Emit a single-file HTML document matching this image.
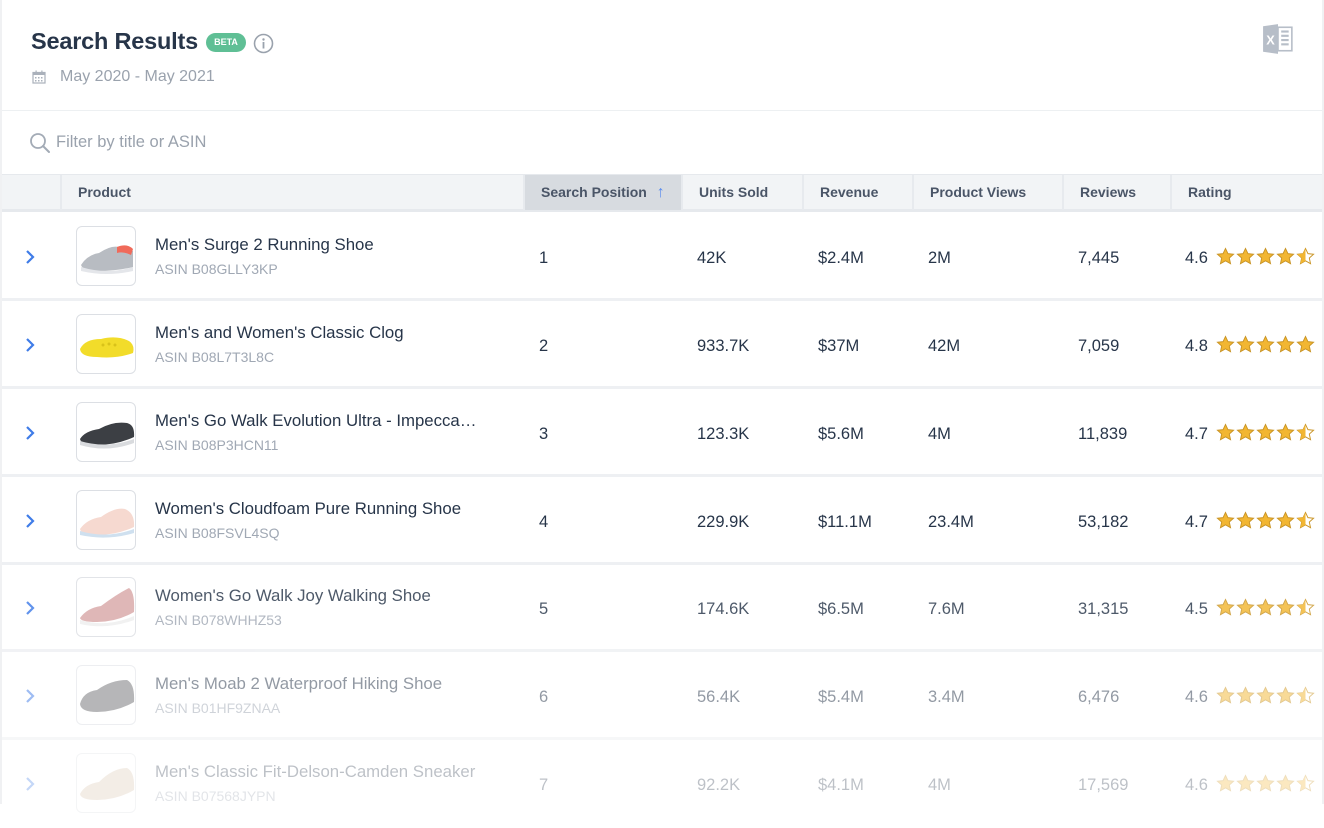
<!DOCTYPE html>
<html><head><meta charset="utf-8"><style>
*{margin:0;padding:0;box-sizing:border-box}
body{width:1324px;height:804px;overflow:hidden;background:#fff;font-family:"Liberation Sans",Arial,sans-serif;color:#273549;position:relative}
.abs{position:absolute}
.hdr{position:absolute;top:174px;left:2px;width:1320px;height:38px;background:#f2f4f6;border-top:1px solid #e6e9ed;border-bottom:3px solid #e6e9ed}
.hc{position:absolute;top:0;height:35px;line-height:35px;font-size:14px;font-weight:bold;color:#4a5567;padding-left:16px;border-left:2px solid #e7eaee}
.row{position:absolute;left:2px;width:1320px;height:88px;border-bottom:3px solid #eef0f3}
.c{position:absolute;top:2px;height:86px;line-height:86px;font-size:16.5px;color:#273549}
.nm{position:absolute;left:153px;top:22px;font-size:16.8px;color:#273549;white-space:nowrap}
.as{position:absolute;left:153px;top:48px;font-size:14px;color:#a0a8b4}
.th{position:absolute;left:74px;top:13px;width:60px;height:60px;border:1px solid #dcdfe4;border-radius:6px;background:#fff;overflow:hidden}
.chev{position:absolute;left:22px;top:36px}
.stars{position:absolute;left:1214px;top:34px}
</style></head><body>
<div class="abs" style="left:0;top:0;width:2px;height:804px;background:#f0f1f3"></div>
<div class="abs" style="right:0;top:0;width:2px;height:804px;background:#f0f1f3"></div>
<div class="abs" style="left:31px;top:28px;font-size:23.5px;font-weight:bold;color:#273549;letter-spacing:-0.2px">Search Results</div>
<div class="abs" style="left:206px;top:33px;width:40px;height:19px;border-radius:10px;background:#5fbf95;color:#fff;font-size:9px;font-weight:bold;text-align:center;line-height:19px">BETA</div>
<svg class="abs" style="left:253px;top:33px" width="21" height="21" viewBox="0 0 21 21"><circle cx="10.5" cy="10.5" r="9" fill="none" stroke="#9aa2ad" stroke-width="1.6"/><circle cx="10.5" cy="6.5" r="1.2" fill="#9aa2ad"/><rect x="9.6" y="9" width="1.8" height="6.5" fill="#9aa2ad"/></svg>
<svg class="abs" style="left:32px;top:70px" width="14" height="14" viewBox="0 0 14 14"><rect x="1" y="2.5" width="12" height="10.5" fill="none" stroke="#aab1bb" stroke-width="1.2"/><rect x="1" y="2.5" width="12" height="2.5" fill="#aab1bb"/><rect x="3.5" y="0.5" width="1.2" height="3" fill="#aab1bb"/><rect x="9.3" y="0.5" width="1.2" height="3" fill="#aab1bb"/><g fill="#aab1bb"><rect x="3" y="7" width="1.5" height="1.5"/><rect x="6" y="7" width="1.5" height="1.5"/><rect x="9" y="7" width="1.5" height="1.5"/><rect x="3" y="10" width="1.5" height="1.5"/><rect x="6" y="10" width="1.5" height="1.5"/><rect x="9" y="10" width="1.5" height="1.5"/></g></svg>
<div class="abs" style="left:60px;top:68px;font-size:16px;color:#9aa2ad">May 2020 - May 2021</div>
<svg class="abs" style="left:1262px;top:23px" width="32" height="32" viewBox="0 0 30 30"><path d="M1 3 L15 1 L15 29 L1 27 Z" fill="#b7bec8"/><text x="4" y="20" font-family="Liberation Sans" font-weight="bold" font-size="12" fill="#fff">X</text><rect x="15" y="4" width="13" height="22" fill="none" stroke="#b7bec8" stroke-width="1.5"/><g fill="#b7bec8"><rect x="18" y="7" width="7" height="2"/><rect x="18" y="11" width="7" height="2"/><rect x="18" y="15" width="7" height="2"/><rect x="18" y="19" width="7" height="2"/></g></svg>
<div class="abs" style="left:2px;top:110px;width:1320px;height:1px;background:#edf0f2"></div>
<svg class="abs" style="left:29px;top:132px" width="22" height="22" viewBox="0 0 22 22"><circle cx="9" cy="9" r="7" fill="none" stroke="#a3abb6" stroke-width="1.8"/><path d="M14 14 L20 20" stroke="#a3abb6" stroke-width="2" stroke-linecap="round"/></svg>
<div class="abs" style="left:56px;top:133px;font-size:16.5px;color:#9aa2ad">Filter by title or ASIN</div>

<div class="hdr">
<div class="hc" style="left:58px;width:463px">Product</div>
<div class="hc" style="left:521px;width:158px;background:#d7dbe0;border-left:2px solid #e7eaee">Search Position <span style="color:#5b8def;font-weight:normal;margin-left:6px;font-size:16px">↑</span></div>
<div class="hc" style="left:679px;width:121px">Units Sold</div>
<div class="hc" style="left:800px;width:110px">Revenue</div>
<div class="hc" style="left:910px;width:150px">Product Views</div>
<div class="hc" style="left:1060px;width:108px">Reviews</div>
<div class="hc" style="left:1168px;width:152px">Rating</div>
</div>

<svg width="0" height="0" style="position:absolute"><defs>
<symbol id="st" viewBox="0 0 20 20"><path d="M10 1.5 L12.6 7 L18.5 7.6 L14 11.6 L15.3 17.5 L10 14.5 L4.7 17.5 L6 11.6 L1.5 7.6 L7.4 7 Z" fill="#f2b632" stroke="#c99425" stroke-width="1"/></symbol>
<symbol id="sh" viewBox="0 0 20 20"><path d="M10 1.5 L12.6 7 L18.5 7.6 L14 11.6 L15.3 17.5 L10 14.5 L4.7 17.5 L6 11.6 L1.5 7.6 L7.4 7 Z" fill="#fff" stroke="#c99425" stroke-width="1"/><path d="M10 1.5 L10 14.5 L4.7 17.5 L6 11.6 L1.5 7.6 L7.4 7 Z" fill="#f2b632"/></symbol>
<symbol id="chev" viewBox="0 0 12 16"><path d="M3 2 L9 8 L3 14" fill="none" stroke="#3f7ce8" stroke-width="2.2"/></symbol>
</defs></svg>

<div class="row" style="top:213px">
<svg class="chev" width="12" height="16"><use href="#chev"/></svg>
<div class="th"><svg width="60" height="60"><path d="M4 38 Q10 28 22 26 Q34 18 42 20 Q50 18 56 24 L56 40 Q40 44 20 44 Q6 44 4 38Z" fill="#b8bcc2"/><path d="M40 20 Q50 16 56 22 L54 28 Q46 24 40 26Z" fill="#f06a5a"/><path d="M4 40 Q30 48 56 40 L56 44 Q30 50 4 44Z" fill="#e4e6ea"/></svg></div>
<div class="nm">Men's Surge 2 Running Shoe</div><div class="as">ASIN B08GLLY3KP</div>
<div class="c" style="left:537px">1</div><div class="c" style="left:695px">42K</div><div class="c" style="left:816px">$2.4M</div><div class="c" style="left:926px">2M</div><div class="c" style="left:1076px">7,445</div><div class="c" style="left:1183px">4.6</div>
<div class="stars"><svg width="100" height="19"><use href="#st" x="0" width="19" height="19"/><use href="#st" x="20" width="19" height="19"/><use href="#st" x="40" width="19" height="19"/><use href="#st" x="60" width="19" height="19"/><use href="#sh" x="80" width="19" height="19"/></svg></div>
</div>

<div class="row" style="top:301px">
<svg class="chev" width="12" height="16"><use href="#chev"/></svg>
<div class="th"><svg width="60" height="60"><path d="M3 34 Q8 24 24 24 Q40 20 52 26 Q58 30 56 38 Q40 44 20 42 Q4 42 3 34Z" fill="#f2dc2a"/><g fill="#d9c21a"><circle cx="26" cy="30" r="1.5"/><circle cx="32" cy="29" r="1.5"/><circle cx="38" cy="30" r="1.5"/></g></svg></div>
<div class="nm">Men's and Women's Classic Clog</div><div class="as">ASIN B08L7T3L8C</div>
<div class="c" style="left:537px">2</div><div class="c" style="left:695px">933.7K</div><div class="c" style="left:816px">$37M</div><div class="c" style="left:926px">42M</div><div class="c" style="left:1076px">7,059</div><div class="c" style="left:1183px">4.8</div>
<div class="stars"><svg width="100" height="19"><use href="#st" x="0" width="19" height="19"/><use href="#st" x="20" width="19" height="19"/><use href="#st" x="40" width="19" height="19"/><use href="#st" x="60" width="19" height="19"/><use href="#st" x="80" width="19" height="19"/></svg></div>
</div>

<div class="row" style="top:389px">
<svg class="chev" width="12" height="16"><use href="#chev"/></svg>
<div class="th"><svg width="60" height="60"><path d="M3 36 Q8 28 22 26 Q36 18 50 20 Q58 22 57 34 Q40 42 20 42 Q4 42 3 36Z" fill="#3c3f44"/><path d="M3 38 Q30 46 57 36 L57 40 Q30 50 3 42Z" fill="#d9dbde"/></svg></div>
<div class="nm">Men's Go Walk Evolution Ultra - Impecca…</div><div class="as">ASIN B08P3HCN11</div>
<div class="c" style="left:537px">3</div><div class="c" style="left:695px">123.3K</div><div class="c" style="left:816px">$5.6M</div><div class="c" style="left:926px">4M</div><div class="c" style="left:1076px">11,839</div><div class="c" style="left:1183px">4.7</div>
<div class="stars"><svg width="100" height="19"><use href="#st" x="0" width="19" height="19"/><use href="#st" x="20" width="19" height="19"/><use href="#st" x="40" width="19" height="19"/><use href="#st" x="60" width="19" height="19"/><use href="#sh" x="80" width="19" height="19"/></svg></div>
</div>

<div class="row" style="top:477px">
<svg class="chev" width="12" height="16"><use href="#chev"/></svg>
<div class="th"><svg width="60" height="60"><path d="M3 38 Q10 28 24 26 Q38 16 48 18 Q58 22 57 36 Q40 44 20 44 Q4 44 3 38Z" fill="#f6d9d0"/><path d="M3 40 Q30 48 57 38 L57 42 Q30 50 3 44Z" fill="#cfe0ef"/></svg></div>
<div class="nm">Women's Cloudfoam Pure Running Shoe</div><div class="as">ASIN B08FSVL4SQ</div>
<div class="c" style="left:537px">4</div><div class="c" style="left:695px">229.9K</div><div class="c" style="left:816px">$11.1M</div><div class="c" style="left:926px">23.4M</div><div class="c" style="left:1076px">53,182</div><div class="c" style="left:1183px">4.7</div>
<div class="stars"><svg width="100" height="19"><use href="#st" x="0" width="19" height="19"/><use href="#st" x="20" width="19" height="19"/><use href="#st" x="40" width="19" height="19"/><use href="#st" x="60" width="19" height="19"/><use href="#sh" x="80" width="19" height="19"/></svg></div>
</div>

<div class="row" style="top:564px;opacity:.82">
<svg class="chev" width="12" height="16"><use href="#chev"/></svg>
<div class="th"><svg width="60" height="60"><path d="M3 40 Q10 30 24 28 Q40 16 52 10 Q58 14 57 34 Q40 44 20 44 Q4 44 3 40Z" fill="#d9a8a8"/><path d="M3 42 Q30 50 57 38 L57 42 Q30 52 3 46Z" fill="#eeeeee"/></svg></div>
<div class="nm">Women's Go Walk Joy Walking Shoe</div><div class="as">ASIN B078WHHZ53</div>
<div class="c" style="left:537px">5</div><div class="c" style="left:695px">174.6K</div><div class="c" style="left:816px">$6.5M</div><div class="c" style="left:926px">7.6M</div><div class="c" style="left:1076px">31,315</div><div class="c" style="left:1183px">4.5</div>
<div class="stars"><svg width="100" height="19"><use href="#st" x="0" width="19" height="19"/><use href="#st" x="20" width="19" height="19"/><use href="#st" x="40" width="19" height="19"/><use href="#st" x="60" width="19" height="19"/><use href="#sh" x="80" width="19" height="19"/></svg></div>
</div>

<div class="row" style="top:652px;opacity:.5">
<svg class="chev" width="12" height="16"><use href="#chev"/></svg>
<div class="th"><svg width="60" height="60"><path d="M3 38 Q6 26 20 24 Q34 14 50 14 Q58 18 57 36 Q40 46 20 46 Q4 46 3 38Z" fill="#6f7073"/></svg></div>
<div class="nm">Men's Moab 2 Waterproof Hiking Shoe</div><div class="as">ASIN B01HF9ZNAA</div>
<div class="c" style="left:537px">6</div><div class="c" style="left:695px">56.4K</div><div class="c" style="left:816px">$5.4M</div><div class="c" style="left:926px">3.4M</div><div class="c" style="left:1076px">6,476</div><div class="c" style="left:1183px">4.6</div>
<div class="stars"><svg width="100" height="19"><use href="#st" x="0" width="19" height="19"/><use href="#st" x="20" width="19" height="19"/><use href="#st" x="40" width="19" height="19"/><use href="#st" x="60" width="19" height="19"/><use href="#sh" x="80" width="19" height="19"/></svg></div>
</div>

<div class="row" style="top:740px;opacity:.3;border-bottom:none">
<svg class="chev" width="12" height="16"><use href="#chev"/></svg>
<div class="th"><svg width="60" height="60"><path d="M3 40 Q8 30 22 28 Q36 14 50 14 Q58 18 57 36 Q40 46 20 46 Q4 46 3 40Z" fill="#d9c4b0"/></svg></div>
<div class="nm">Men's Classic Fit-Delson-Camden Sneaker</div><div class="as">ASIN B07568JYPN</div>
<div class="c" style="left:537px">7</div><div class="c" style="left:695px">92.2K</div><div class="c" style="left:816px">$4.1M</div><div class="c" style="left:926px">4M</div><div class="c" style="left:1076px">17,569</div><div class="c" style="left:1183px">4.6</div>
<div class="stars"><svg width="100" height="19"><use href="#st" x="0" width="19" height="19"/><use href="#st" x="20" width="19" height="19"/><use href="#st" x="40" width="19" height="19"/><use href="#st" x="60" width="19" height="19"/><use href="#sh" x="80" width="19" height="19"/></svg></div>
</div>
</body></html>
